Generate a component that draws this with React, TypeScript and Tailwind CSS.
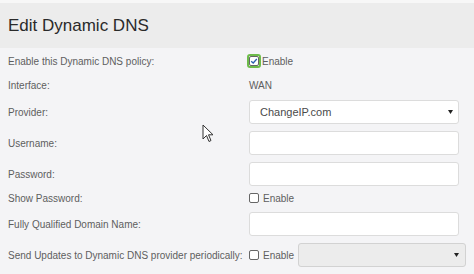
import React from 'react';

const Check = ({ checked }: { checked?: boolean }) => (
  <span className="inline-flex h-[10px] w-[10px] items-center justify-center rounded-[2px] border border-[#666] bg-white">
    {checked && (
      <svg viewBox="0 0 10 10" className="h-[8px] w-[8px]">
        <path d="M1.5 5.2 L4 7.5 L8.5 2.5" fill="none" stroke="#2b5fb0" strokeWidth="1.6" />
      </svg>
    )}
  </span>
);

const Caret = () => (
  <svg viewBox="0 0 5 4" className="h-[4px] w-[5px]">
    <path d="M0 0 H5 L2.5 4 Z" fill="#222" />
  </svg>
);

const Row = ({ label, className = '', children }: { label: string; className?: string; children?: React.ReactNode }) => (
  <div className={`flex items-center ${className}`}>
    <div className="w-[241px] shrink-0 whitespace-nowrap">{label}</div>
    <div className="flex flex-1 items-center">{children}</div>
  </div>
);

const Input = () => <div className="h-[24px] w-[210px] rounded-[3px] border border-[#dcdcdc] bg-white" />;

export default function App() {
  return (
    <div className="relative h-[274px] w-[474px] overflow-hidden bg-[#f4f4f6] font-['Liberation_Sans',Arial,sans-serif] text-[10px] text-[#5e5e5e]">
      <div className="flex h-[48px] items-center border-t-[3px] border-[#f7f7f7] bg-[#ececec] px-[8px] text-[17px] text-[#2a2a2a]">
        Edit Dynamic DNS
      </div>
      <div className="pl-[8px]">
        <Row label="Enable this Dynamic DNS policy:" className="h-[25px] pt-[1px]">
          <span className="-ml-[2px] inline-flex h-[14px] w-[14px] items-center justify-center rounded-[3px] border-2 border-[#6dbb4a]">
            <Check checked />
          </span>
          <span className="ml-[1px]">Enable</span>
        </Row>
        <Row label="Interface:" className="h-[24px]">
          WAN
        </Row>
        <Row label="Provider:" className="mt-[3px] h-[24px]">
          <div className="flex h-[24px] w-[210px] items-center justify-between rounded-[3px] border border-[#dcdcdc] bg-white pl-[10px] pr-[5px] text-[11px] text-[#4a4a4a]">
            ChangeIP.com
            <Caret />
          </div>
        </Row>
        <Row label="Username:" className="mt-[7px] h-[24px]">
          <Input />
        </Row>
        <Row label="Password:" className="mt-[7px] h-[24px]">
          <Input />
        </Row>
        <Row label="Show Password:" className="h-[24px]">
          <Check />
          <span className="ml-[4px]">Enable</span>
        </Row>
        <Row label="Fully Qualified Domain Name:" className="mt-[2px] h-[24px]">
          <Input />
        </Row>
        <Row label="Send Updates to Dynamic DNS provider periodically:" className="mt-[7px] h-[24px]">
          <Check />
          <span className="ml-[4px]">Enable</span>
          <div className="ml-[4px] flex h-[24px] w-[168px] items-center justify-end rounded-[3px] border border-[#d2d2d2] bg-[#ececec] pr-[6px]">
            <Caret />
          </div>
        </Row>
      </div>
      <svg viewBox="0 0 12 19" className="absolute left-[202px] top-[124px] h-[19px] w-[12px]">
        <path d="M1 1 V15 L4.5 11.5 L7 17.5 L9 16.5 L6.5 10.8 H11 Z" fill="#fff" stroke="#333" strokeWidth="1" strokeLinejoin="round" />
      </svg>
    </div>
  );
}
